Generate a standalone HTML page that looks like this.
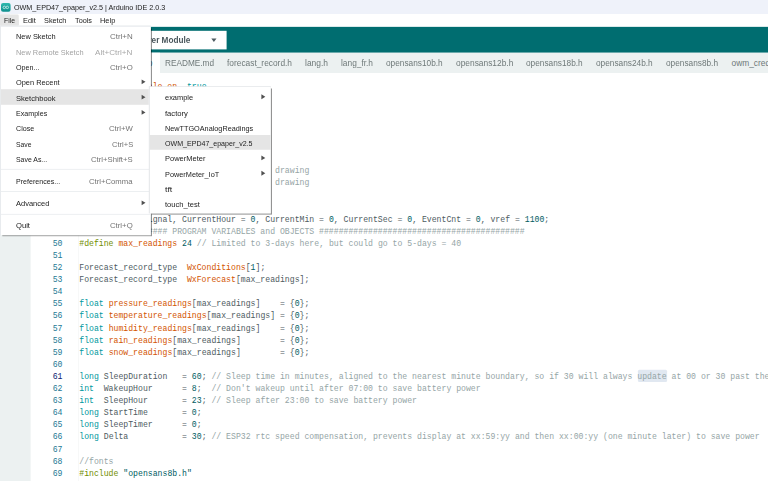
<!DOCTYPE html><html><head><meta charset="utf-8"><title>OWM_EPD47_epaper_v2.5 | Arduino IDE 2.0.3</title><style>

html,body{margin:0;padding:0}
body{width:768px;height:481px;overflow:hidden;background:#fff;position:relative;font-family:"Liberation Sans",sans-serif}
.abs{position:absolute}
.t{position:absolute;white-space:pre;line-height:1}
.code{position:absolute;white-space:pre;font-family:"Liberation Mono",monospace;font-size:8.1737px;line-height:12.100px;height:12.100px;left:79.25px}
.ln{position:absolute;white-space:pre;font-family:"Liberation Mono",monospace;font-size:8.1737px;line-height:12.100px;height:12.100px;width:40px;text-align:right;color:#237893}
.mi{position:absolute;white-space:pre;font-size:7.9px;line-height:10px;height:10px;color:#222}
.sc{position:absolute;white-space:pre;font-size:7.9px;line-height:10px;height:10px;color:#737373;text-align:right}
.arr{position:absolute;width:0;height:0;border-left:4.2px solid #505050;border-top:2.7px solid transparent;border-bottom:2.7px solid transparent}
.sep{position:absolute;height:0.7px;background:#e4e4e4}
.tab{position:absolute;white-space:pre;font-size:8.37px;line-height:11px;height:11px;color:#6f7979;top:57.6px}

</style></head><body>
<svg class="abs" style="left:0px;top:52px" width="31" height="429" viewBox="0 52 31 429"><rect x="0.00" y="52.75" width="30.60" height="428.25" fill="#ecf1f1"/></svg>
<div class="ln" style="left:22.50px;top:80.55px;color:#237893">37</div>
<div class="code" style="top:80.55px"><span style="color:#728e00">#define</span><span style="color:#4e5b61"> </span><span style="color:#d35400">autoscale_on</span><span style="color:#4e5b61">  </span><span style="color:#00979d">true</span></div>
<div class="ln" style="left:22.50px;top:92.65px;color:#237893">38</div>
<div class="code" style="top:92.65px"><span style="color:#728e00">#define</span><span style="color:#4e5b61"> </span><span style="color:#d35400">autoscale_off</span><span style="color:#4e5b61"> </span><span style="color:#00979d">false</span></div>
<div class="ln" style="left:22.50px;top:104.75px;color:#237893">39</div>
<div class="code" style="top:104.75px"><span style="color:#728e00">#define</span><span style="color:#4e5b61"> </span><span style="color:#d35400">barchart_on</span><span style="color:#4e5b61">   </span><span style="color:#00979d">true</span></div>
<div class="ln" style="left:22.50px;top:116.85px;color:#237893">40</div>
<div class="code" style="top:116.85px"><span style="color:#728e00">#define</span><span style="color:#4e5b61"> </span><span style="color:#d35400">barchart_off</span><span style="color:#4e5b61">  </span><span style="color:#00979d">false</span></div>
<div class="ln" style="left:22.50px;top:128.95px;color:#237893">41</div>
<div class="ln" style="left:22.50px;top:141.05px;color:#237893">42</div>
<div class="code" style="top:141.05px"><span style="color:#00979d">boolean</span><span style="color:#4e5b61"> LargeIcon   = </span><span style="color:#00979d">true</span><span style="color:#4e5b61">;</span></div>
<div class="ln" style="left:22.50px;top:153.15px;color:#237893">43</div>
<div class="code" style="top:153.15px"><span style="color:#00979d">boolean</span><span style="color:#4e5b61"> SmallIcon   = </span><span style="color:#00979d">false</span><span style="color:#4e5b61">;</span></div>
<div class="ln" style="left:22.50px;top:165.25px;color:#237893">44</div>
<div class="code" style="top:165.25px"><span style="color:#728e00">#define</span><span style="color:#4e5b61"> </span><span style="color:#d35400">Large</span><span style="color:#4e5b61">  </span><span style="color:#005c5f">20</span><span style="color:#4e5b61">           </span><span style="color:#95a5a6">// For icon drawing</span></div>
<div class="ln" style="left:22.50px;top:177.35px;color:#237893">45</div>
<div class="code" style="top:177.35px"><span style="color:#728e00">#define</span><span style="color:#4e5b61"> </span><span style="color:#d35400">Small</span><span style="color:#4e5b61">  </span><span style="color:#005c5f">10</span><span style="color:#4e5b61">           </span><span style="color:#95a5a6">// For icon drawing</span></div>
<div class="ln" style="left:22.50px;top:189.45px;color:#237893">46</div>
<div class="code" style="top:189.45px"><span style="color:#00979d">String</span><span style="color:#4e5b61">  Time_str = </span><span style="color:#005c5f">&quot;--:--:--&quot;</span><span style="color:#4e5b61">;</span></div>
<div class="ln" style="left:22.50px;top:201.55px;color:#237893">47</div>
<div class="code" style="top:201.55px"><span style="color:#00979d">String</span><span style="color:#4e5b61">  Date_str = </span><span style="color:#005c5f">&quot;-- --- ----&quot;</span><span style="color:#4e5b61">;</span></div>
<div class="ln" style="left:22.50px;top:213.65px;color:#237893">48</div>
<div class="code" style="top:213.65px"><span style="color:#00979d">int</span><span style="color:#4e5b61">     wifi_signal, CurrentHour = </span><span style="color:#005c5f">0</span><span style="color:#4e5b61">, CurrentMin = </span><span style="color:#005c5f">0</span><span style="color:#4e5b61">, CurrentSec = </span><span style="color:#005c5f">0</span><span style="color:#4e5b61">, EventCnt = </span><span style="color:#005c5f">0</span><span style="color:#4e5b61">, vref = </span><span style="color:#005c5f">1100</span><span style="color:#4e5b61">;</span></div>
<div class="ln" style="left:22.50px;top:225.75px;color:#237893">49</div>
<div class="code" style="top:225.75px"><span style="color:#95a5a6">//################ PROGRAM VARIABLES and OBJECTS ##########################################</span></div>
<div class="ln" style="left:22.50px;top:237.85px;color:#237893">50</div>
<div class="code" style="top:237.85px"><span style="color:#728e00">#define</span><span style="color:#4e5b61"> </span><span style="color:#d35400">max_readings</span><span style="color:#4e5b61"> </span><span style="color:#005c5f">24</span><span style="color:#4e5b61"> </span><span style="color:#95a5a6">// Limited to 3-days here, but could go to 5-days = 40</span></div>
<div class="ln" style="left:22.50px;top:249.95px;color:#237893">51</div>
<div class="ln" style="left:22.50px;top:262.05px;color:#237893">52</div>
<div class="code" style="top:262.05px"><span style="color:#4e5b61">Forecast_record_type  </span><span style="color:#d35400">WxConditions</span><span style="color:#4e5b61">[</span><span style="color:#005c5f">1</span><span style="color:#4e5b61">];</span></div>
<div class="ln" style="left:22.50px;top:274.15px;color:#237893">53</div>
<div class="code" style="top:274.15px"><span style="color:#4e5b61">Forecast_record_type  </span><span style="color:#d35400">WxForecast</span><span style="color:#4e5b61">[max_readings];</span></div>
<div class="ln" style="left:22.50px;top:286.25px;color:#237893">54</div>
<div class="ln" style="left:22.50px;top:298.35px;color:#237893">55</div>
<div class="code" style="top:298.35px"><span style="color:#00979d">float</span><span style="color:#4e5b61"> </span><span style="color:#d35400">pressure_readings</span><span style="color:#4e5b61">[max_readings]    = {</span><span style="color:#005c5f">0</span><span style="color:#4e5b61">};</span></div>
<div class="ln" style="left:22.50px;top:310.45px;color:#237893">56</div>
<div class="code" style="top:310.45px"><span style="color:#00979d">float</span><span style="color:#4e5b61"> </span><span style="color:#d35400">temperature_readings</span><span style="color:#4e5b61">[max_readings] = {</span><span style="color:#005c5f">0</span><span style="color:#4e5b61">};</span></div>
<div class="ln" style="left:22.50px;top:322.55px;color:#237893">57</div>
<div class="code" style="top:322.55px"><span style="color:#00979d">float</span><span style="color:#4e5b61"> </span><span style="color:#d35400">humidity_readings</span><span style="color:#4e5b61">[max_readings]    = {</span><span style="color:#005c5f">0</span><span style="color:#4e5b61">};</span></div>
<div class="ln" style="left:22.50px;top:334.65px;color:#237893">58</div>
<div class="code" style="top:334.65px"><span style="color:#00979d">float</span><span style="color:#4e5b61"> </span><span style="color:#d35400">rain_readings</span><span style="color:#4e5b61">[max_readings]        = {</span><span style="color:#005c5f">0</span><span style="color:#4e5b61">};</span></div>
<div class="ln" style="left:22.50px;top:346.75px;color:#237893">59</div>
<div class="code" style="top:346.75px"><span style="color:#00979d">float</span><span style="color:#4e5b61"> </span><span style="color:#d35400">snow_readings</span><span style="color:#4e5b61">[max_readings]        = {</span><span style="color:#005c5f">0</span><span style="color:#4e5b61">};</span></div>
<div class="ln" style="left:22.50px;top:358.85px;color:#237893">60</div>
<div class="ln" style="left:22.50px;top:370.95px;color:#0b216f">61</div>
<svg class="abs" style="left:637px;top:369px" width="31" height="14" viewBox="637 369 31 14"><rect x="637.90" y="369.80" width="29.20" height="12.10" rx="1.5" fill="#e1e8f1"/></svg>
<div class="code" style="top:370.95px"><span style="color:#00979d">long</span><span style="color:#4e5b61"> SleepDuration   = </span><span style="color:#005c5f">60</span><span style="color:#4e5b61">; </span><span style="color:#95a5a6">// Sleep time in minutes, aligned to the nearest minute boundary, so if 30 will always update at 00 or 30 past the hour</span></div>
<div class="ln" style="left:22.50px;top:383.05px;color:#237893">62</div>
<div class="code" style="top:383.05px"><span style="color:#00979d">int</span><span style="color:#4e5b61">  WakeupHour      = </span><span style="color:#005c5f">8</span><span style="color:#4e5b61">;  </span><span style="color:#95a5a6">// Don&#x27;t wakeup until after 07:00 to save battery power</span></div>
<div class="ln" style="left:22.50px;top:395.15px;color:#237893">63</div>
<div class="code" style="top:395.15px"><span style="color:#00979d">int</span><span style="color:#4e5b61">  SleepHour       = </span><span style="color:#005c5f">23</span><span style="color:#4e5b61">; </span><span style="color:#95a5a6">// Sleep after 23:00 to save battery power</span></div>
<div class="ln" style="left:22.50px;top:407.25px;color:#237893">64</div>
<div class="code" style="top:407.25px"><span style="color:#00979d">long</span><span style="color:#4e5b61"> StartTime       = </span><span style="color:#005c5f">0</span><span style="color:#4e5b61">;</span></div>
<div class="ln" style="left:22.50px;top:419.35px;color:#237893">65</div>
<div class="code" style="top:419.35px"><span style="color:#00979d">long</span><span style="color:#4e5b61"> SleepTimer      = </span><span style="color:#005c5f">0</span><span style="color:#4e5b61">;</span></div>
<div class="ln" style="left:22.50px;top:431.45px;color:#237893">66</div>
<div class="code" style="top:431.45px"><span style="color:#00979d">long</span><span style="color:#4e5b61"> Delta           = </span><span style="color:#005c5f">30</span><span style="color:#4e5b61">; </span><span style="color:#95a5a6">// ESP32 rtc speed compensation, prevents display at xx:59:yy and then xx:00:yy (one minute later) to save power</span></div>
<div class="ln" style="left:22.50px;top:443.55px;color:#237893">67</div>
<div class="ln" style="left:22.50px;top:455.65px;color:#237893">68</div>
<div class="code" style="top:455.65px"><span style="color:#95a5a6">//fonts</span></div>
<div class="ln" style="left:22.50px;top:467.75px;color:#237893">69</div>
<div class="code" style="top:467.75px"><span style="color:#728e00">#include</span><span style="color:#4e5b61"> </span><span style="color:#005c5f">&quot;opensans8b.h&quot;</span></div>
<div class="ln" style="left:22.50px;top:479.85px;color:#237893">70</div>
<div class="code" style="top:479.85px"><span style="color:#728e00">#include</span><span style="color:#4e5b61"> </span><span style="color:#005c5f">&quot;opensans10b.h&quot;</span></div>
<svg class="abs" style="left:78px;top:73px" width="1" height="408" viewBox="78 73 1 408"><rect x="78.10" y="73.00" width="0.60" height="408.00" fill="#f2f4f4"/></svg>
<svg class="abs" style="left:0px;top:0px" width="768" height="74" viewBox="0 0 768 74"><rect x="0.00" y="0.00" width="768.00" height="14.15" fill="#eff2fa"/><rect x="0.00" y="14.15" width="768.00" height="12.85" fill="#fff"/><rect x="0.00" y="14.50" width="18.75" height="11.00" rx="1.2" fill="#e5e5e5"/><rect x="0.00" y="14.50" width="10.00" height="11.00" fill="#e5e5e5"/><rect x="0.00" y="20.00" width="18.75" height="5.50" fill="#e5e5e5"/><rect x="0.00" y="26.85" width="768.00" height="25.90" fill="#006d70"/><rect x="95.00" y="30.80" width="131.60" height="18.60" fill="#fff"/><polygon points="211.3,38.6 216.5,38.6 213.9,41.9" fill="#4e5b61"/><rect x="30.60" y="52.75" width="737.40" height="20.25" fill="#ecf1f1"/><rect x="30.60" y="52.75" width="129.40" height="20.25" fill="#fff"/></svg>
<svg class="abs" style="left:1.2px;top:2.9px" width="9.6" height="8.8" viewBox="0 0 9.6 8.8"><defs><linearGradient id="ig" x1="0" y1="0" x2="0" y2="1"><stop offset="0" stop-color="#2fb8ae"/><stop offset="1" stop-color="#0d8f8d"/></linearGradient></defs><rect x="0" y="0" width="9.6" height="8.8" rx="2.1" fill="url(#ig)"/><circle cx="3.3" cy="4.4" r="1.25" fill="none" stroke="#e6f7f5" stroke-width="0.7"/><circle cx="6.3" cy="4.4" r="1.25" fill="none" stroke="#e6f7f5" stroke-width="0.7"/></svg>
<div class="t" id="title" style="transform-origin:0 0;transform:scaleX(0.8981);text-align:left;left:14px;top:4.1px;font-size:8px;color:#1a1a1a">OWM_EPD47_epaper_v2.5 | Arduino IDE 2.0.3</div>
<div class="mi" id="mb_File" style="transform-origin:0 0;transform:scaleX(0.8649);text-align:left;left:4px;top:16.3px">File</div>
<div class="mi" id="mb_Edit" style="transform-origin:0 0;transform:scaleX(0.9332);text-align:left;left:22.8px;top:16.3px">Edit</div>
<div class="mi" id="mb_Sketch" style="transform-origin:0 0;transform:scaleX(0.9285);text-align:left;left:43.8px;top:16.3px">Sketch</div>
<div class="mi" id="mb_Tools" style="transform-origin:0 0;transform:scaleX(0.9228);text-align:left;left:75px;top:16.3px">Tools</div>
<div class="mi" id="mb_Help" style="transform-origin:0 0;transform:scaleX(0.9424);text-align:left;left:100px;top:16.3px">Help</div>
<div class="t" id="board" style="transform-origin:100% 0;transform:scaleX(0.9130);left:94.62px;top:35.6px;font-size:9px;font-weight:bold;color:#4a575d">ESP32 Wrover Module</div>
<div class="tab" id="tab0" style="transform-origin:100% 0;transform:scaleX(1.0000);left:35.29px;color:#3d7fa0">OWM_EPD47_epaper_v2.5.ino</div>
<div class="tab" id="tab1" style="transform-origin:0 0;transform:scaleX(0.9859);text-align:left;left:165px">README.md</div>
<div class="tab" id="tab2" style="transform-origin:0 0;transform:scaleX(0.9990);text-align:left;left:227.3px">forecast_record.h</div>
<div class="tab" id="tab3" style="transform-origin:0 0;transform:scaleX(1.0096);text-align:left;left:305px">lang.h</div>
<div class="tab" id="tab4" style="transform-origin:0 0;transform:scaleX(0.9976);text-align:left;left:340.7px">lang_fr.h</div>
<div class="tab" id="tab5" style="transform-origin:0 0;transform:scaleX(0.9915);text-align:left;left:386px">opensans10b.h</div>
<div class="tab" id="tab6" style="transform-origin:0 0;transform:scaleX(1.0020);text-align:left;left:456px">opensans12b.h</div>
<div class="tab" id="tab7" style="transform-origin:0 0;transform:scaleX(0.9915);text-align:left;left:526px">opensans18b.h</div>
<div class="tab" id="tab8" style="transform-origin:0 0;transform:scaleX(0.9923);text-align:left;left:596px">opensans24b.h</div>
<div class="tab" id="tab9" style="transform-origin:0 0;transform:scaleX(0.9899);text-align:left;left:666px">opensans8b.h</div>
<div class="tab" id="tab10" style="left:731.5px">owm_credentials.h</div>
<svg class="abs" style="left:0px;top:25px" width="156" height="215" viewBox="0 25 156 215"><defs><filter id="mb" x="-5%" y="-5%" width="110%" height="110%"><feGaussianBlur stdDeviation="0.45"/></filter></defs><rect x="2.30" y="28.50" width="149.70" height="207.70" fill="#000" opacity="0.42" filter="url(#mb)"/><rect x="0.00" y="25.50" width="150.80" height="209.70" fill="#e6e9ec"/><rect x="0.90" y="26.70" width="149.80" height="208.50" fill="#fff"/><rect x="0.90" y="89.20" width="147.90" height="15.60" fill="#e5e5e5"/><rect x="0.90" y="168.90" width="149.80" height="0.80" fill="#e8ebee"/><rect x="0.90" y="191.20" width="149.80" height="0.80" fill="#e8ebee"/><rect x="0.90" y="213.90" width="149.80" height="0.80" fill="#e8ebee"/><polygon points="141.60,79.45 145.50,81.85 141.60,84.25" fill="#505050"/><polygon points="141.60,94.75 145.50,97.15 141.60,99.55" fill="#505050"/><polygon points="141.60,110.05 145.50,112.45 141.60,114.85" fill="#505050"/><polygon points="141.60,200.40 145.50,202.80 141.60,205.20" fill="#505050"/></svg>
<div class="mi" id="m0" style="transform-origin:0 0;transform:scaleX(0.9404);text-align:left;left:15.8px;top:32px;color:#222">New Sketch</div>
<div class="sc" id="s0" style="transform-origin:0 0;transform:scaleX(1.0054);text-align:left;left:110px;top:32px;color:#737373">Ctrl+N</div>
<div class="mi" id="m1" style="transform-origin:0 0;transform:scaleX(0.9385);text-align:left;left:15.8px;top:48px;color:#a3a3a3">New Remote Sketch</div>
<div class="sc" id="s1" style="transform-origin:0 0;transform:scaleX(1.0245);text-align:left;left:95.4px;top:48px;color:#a8a8a8">Alt+Ctrl+N</div>
<div class="mi" id="m2" style="transform-origin:0 0;transform:scaleX(0.9038);text-align:left;left:15.8px;top:63px;color:#222">Open...</div>
<div class="sc" id="s2" style="transform-origin:0 0;transform:scaleX(0.9856);text-align:left;left:110px;top:63px;color:#737373">Ctrl+O</div>
<div class="mi" id="m3" style="transform-origin:0 0;transform:scaleX(0.9376);text-align:left;left:15.8px;top:78px;color:#222">Open Recent</div>
<div class="mi" id="m4" style="transform-origin:0 0;transform:scaleX(0.9604);text-align:left;left:15.8px;top:94px;color:#222">Sketchbook</div>
<div class="mi" id="m5" style="transform-origin:0 0;transform:scaleX(0.9003);text-align:left;left:15.8px;top:109px;color:#222">Examples</div>
<div class="mi" id="m6" style="transform-origin:0 0;transform:scaleX(0.9015);text-align:left;left:15.8px;top:124px;color:#222">Close</div>
<div class="sc" id="s6" style="transform-origin:0 0;transform:scaleX(0.9845);text-align:left;left:108.75px;top:124px;color:#737373">Ctrl+W</div>
<div class="mi" id="m7" style="transform-origin:0 0;transform:scaleX(0.8583);text-align:left;left:15.8px;top:140px;color:#222">Save</div>
<div class="sc" id="s7" style="transform-origin:0 0;transform:scaleX(0.9568);text-align:left;left:111.5px;top:140px;color:#737373">Ctrl+S</div>
<div class="mi" id="m8" style="transform-origin:0 0;transform:scaleX(0.8753);text-align:left;left:15.8px;top:155px;color:#222">Save As...</div>
<div class="sc" id="s8" style="transform-origin:0 0;transform:scaleX(0.9801);text-align:left;left:91px;top:155px;color:#737373">Ctrl+Shift+S</div>
<div class="mi" id="m9" style="transform-origin:0 0;transform:scaleX(0.8997);text-align:left;left:15.8px;top:177px;color:#222">Preferences...</div>
<div class="sc" id="s9" style="transform-origin:0 0;transform:scaleX(0.9772);text-align:left;left:89.2px;top:177px;color:#737373">Ctrl+Comma</div>
<div class="mi" id="m10" style="transform-origin:0 0;transform:scaleX(0.9513);text-align:left;left:15.8px;top:199px;color:#222">Advanced</div>
<div class="mi" id="m11" style="transform-origin:0 0;transform:scaleX(0.9666);text-align:left;left:15.8px;top:221px;color:#222">Quit</div>
<div class="sc" id="s11" style="transform-origin:0 0;transform:scaleX(0.9856);text-align:left;left:110px;top:221px;color:#737373">Ctrl+Q</div>
<svg class="abs" style="left:146px;top:84px" width="130" height="134" viewBox="146 84 130 134"><defs><filter id="sb" x="-5%" y="-5%" width="110%" height="110%"><feGaussianBlur stdDeviation="0.45"/></filter></defs><rect x="151.50" y="88.50" width="120.50" height="126.10" fill="#000" opacity="0.42" filter="url(#sb)"/><rect x="148.80" y="86.20" width="122.00" height="127.20" fill="#e3e5e8"/><rect x="149.80" y="86.90" width="120.90" height="126.50" fill="#fff"/><rect x="149.80" y="135.00" width="120.90" height="14.75" fill="#e5e5e5"/><polygon points="261.40,94.35 265.30,96.75 261.40,99.15" fill="#505050"/><polygon points="261.40,155.55 265.30,157.95 261.40,160.35" fill="#505050"/><polygon points="261.40,170.85 265.30,173.25 261.40,175.65" fill="#505050"/></svg>
<div class="mi" id="sm0" style="transform-origin:0 0;transform:scaleX(0.9421);text-align:left;left:165px;top:93px">example</div>
<div class="mi" id="sm1" style="transform-origin:0 0;transform:scaleX(0.9668);text-align:left;left:165px;top:109px">factory</div>
<div class="mi" id="sm2" style="transform-origin:0 0;transform:scaleX(0.9215);text-align:left;left:165px;top:124px">NewTTGOAnalogReadings</div>
<div class="mi" id="sm3" style="transform-origin:0 0;transform:scaleX(0.8946);text-align:left;left:165px;top:139px">OWM_EPD47_epaper_v2.5</div>
<div class="mi" id="sm4" style="transform-origin:0 0;transform:scaleX(0.9495);text-align:left;left:165px;top:154px">PowerMeter</div>
<div class="mi" id="sm5" style="transform-origin:0 0;transform:scaleX(0.9292);text-align:left;left:165px;top:170px">PowerMeter_IoT</div>
<div class="mi" id="sm6" style="transform-origin:0 0;transform:scaleX(1.1097);text-align:left;left:165px;top:185px">tft</div>
<div class="mi" id="sm7" style="transform-origin:0 0;transform:scaleX(0.9555);text-align:left;left:165px;top:200px">touch_test</div>
</body></html>
